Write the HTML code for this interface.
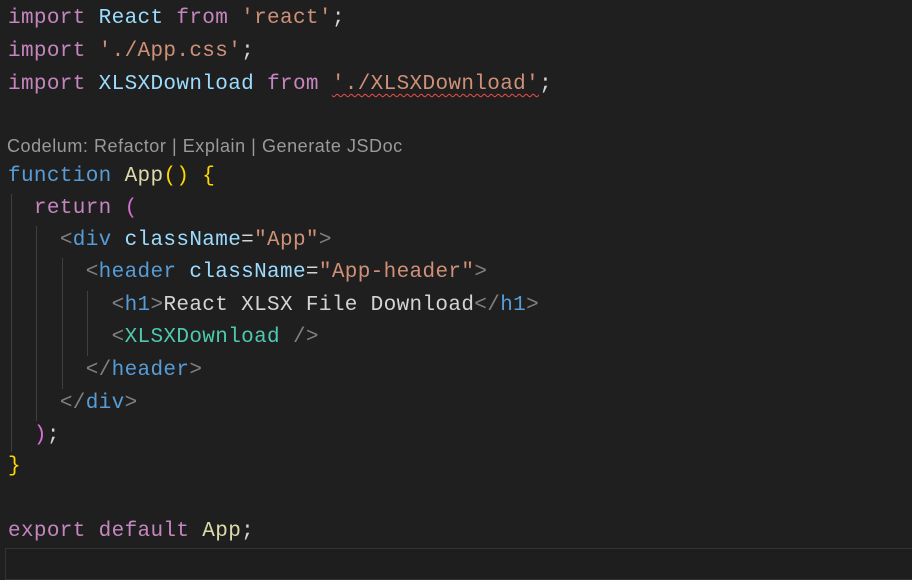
<!DOCTYPE html>
<html><head><style>
body{margin:0;width:912px;height:570px;background:#1f1f1f;overflow:hidden;position:relative;font-family:"Liberation Mono",monospace;font-size:21px;letter-spacing:0.35px}
.l{position:absolute;left:8px;height:30px;line-height:30px;white-space:pre;color:#d4d4d4}
.k{color:#c586c0}.v{color:#9cdcfe}.s{color:#ce9178}.f{color:#dcdcaa}.b{color:#569cd6}.y{color:#ffd700}.g{color:#808080}.t{color:#4ec9b0}.p{color:#da70d6}
.cl{position:absolute;left:7px;top:136px;font-family:"Liberation Sans",sans-serif;font-size:18px;color:#9a9a9a;letter-spacing:0.55px}
.gd{position:absolute;width:1px;background:#404040}
.sq{text-decoration:underline wavy #f14c4c;text-underline-offset:4px;text-decoration-thickness:1px}
</style></head><body>
<div class="l" style="top:4px"><span class="k">import</span> <span class="v">React</span> <span class="k">from</span> <span class="s">'react'</span>;</div>
<div class="l" style="top:37px"><span class="k">import</span> <span class="s">'./App.css'</span>;</div>
<div class="l" style="top:70px"><span class="k">import</span> <span class="v">XLSXDownload</span> <span class="k">from</span> <span class="s sq">'./XLSXDownload'</span>;</div>
<div class="cl">Codelum: Refactor | Explain | Generate JSDoc</div>
<div class="l" style="top:162px"><span class="b">function</span> <span class="f">App</span><span class="y">()</span> <span class="y">{</span></div>
<div class="l" style="top:194px">  <span class="k">return</span> <span class="p">(</span></div>
<div class="l" style="top:226px">    <span class="g">&lt;</span><span class="b">div</span> <span class="v">className</span>=<span class="s">"App"</span><span class="g">&gt;</span></div>
<div class="l" style="top:258px">      <span class="g">&lt;</span><span class="b">header</span> <span class="v">className</span>=<span class="s">"App-header"</span><span class="g">&gt;</span></div>
<div class="l" style="top:291px">        <span class="g">&lt;</span><span class="b">h1</span><span class="g">&gt;</span>React XLSX File Download<span class="g">&lt;/</span><span class="b">h1</span><span class="g">&gt;</span></div>
<div class="l" style="top:323px">        <span class="g">&lt;</span><span class="t">XLSXDownload</span> <span class="g">/&gt;</span></div>
<div class="l" style="top:356px">      <span class="g">&lt;/</span><span class="b">header</span><span class="g">&gt;</span></div>
<div class="l" style="top:389px">    <span class="g">&lt;/</span><span class="b">div</span><span class="g">&gt;</span></div>
<div class="l" style="top:421px">  <span class="p">)</span>;</div>
<div class="l" style="top:452px"><span class="y">}</span></div>
<div class="l" style="top:517px"><span class="k">export</span> <span class="k">default</span> <span class="f">App</span>;</div>
<div class="gd" style="left:11px;top:194px;height:258px"></div>
<div class="gd" style="left:36px;top:226px;height:195px"></div>
<div class="gd" style="left:62px;top:258px;height:131px"></div>
<div class="gd" style="left:87px;top:291px;height:65px"></div>
<div style="position:absolute;left:5px;top:548px;width:920px;height:30px;border:1px solid #333;background:#1e1e1e"></div>
</body></html>
